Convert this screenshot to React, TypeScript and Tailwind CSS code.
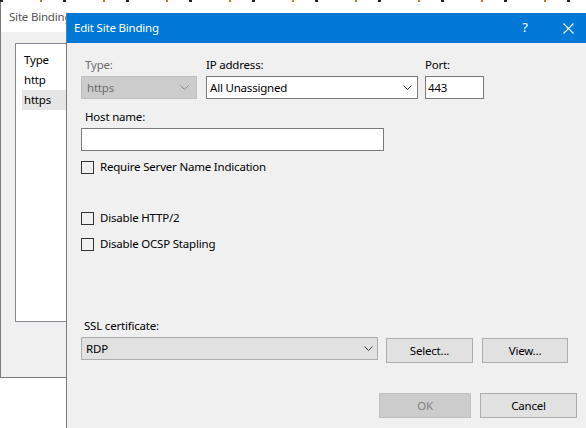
import React from 'react'

const font = { fontFamily: '"Noto Sans", "Open Sans", sans-serif', letterSpacing: '-0.2px' }

function Chevron({ color = '#333333' }: { color?: string }) {
  return (
    <svg width="9" height="5" viewBox="0 0 9 5" className="shrink-0">
      <path d="M0.5 0.5 L4.5 4.5 L8.5 0.5" fill="none" stroke={color} strokeWidth="1" />
    </svg>
  )
}

function Checkbox({ label }: { label: string }) {
  return (
    <div className="flex items-center h-[14px]">
      <div className="w-[13px] h-[13px] border border-[#333333] bg-[#f0f0f0]" />
      <span className="ml-[6px] text-[11.5px] leading-[16px] text-black">{label}</span>
    </div>
  )
}

function Button({ label, width, disabled }: { label: string; width: string; disabled?: boolean }) {
  return (
    <div
      className={
        disabled
          ? `${width} h-[25px] flex items-center justify-center border border-[#bfbfbf] bg-[#cccccc] text-[#838383] text-[11.5px]`
          : `${width} h-[25px] flex items-center justify-center border border-[#adadad] bg-[#e1e1e1] text-black text-[11.5px]`
      }
    >
      {label}
    </div>
  )
}

function BackWindow() {
  return (
    <div className="absolute left-0 top-[2px] w-[120px] h-[376px] border-l border-b border-[#7a7a7a] bg-[#f0f0f0] flex flex-col">
      <div className="h-[30px] bg-white flex items-center pl-[8px] text-[11.5px] text-[#555555]">Site Bindings</div>
      <div className="ml-[14px] mt-[11px] w-[120px] h-[279px] border border-[#828790] bg-white pt-[6px] pl-[6px] text-[11.5px] text-black">
        <div className="h-[20px] pl-[2px] leading-[20px]">Type</div>
        <div className="h-[20px] pl-[2px] leading-[20px]">http</div>
        <div className="h-[20px] pl-[2px] leading-[20px] bg-[#e5e5e5]">https</div>
      </div>
    </div>
  )
}

function Dialog() {
  return (
    <div className="absolute left-[66px] top-[13px] w-[530px] h-[420px] bg-[#f0f0f0] border-l border-[#7a7a7a] flex flex-col">
      <div className="h-[30px] bg-[#0078d7] flex items-center text-white text-[11.5px]">
        <span className="ml-[7px] flex-1">Edit Site Binding</span>
        <span className="w-[20px] text-center text-[13px] mr-[28px]">?</span>
        <svg width="11" height="11" viewBox="0 0 11 11" className="mr-[22px]">
          <path d="M0.5 0.5 L10.5 10.5 M10.5 0.5 L0.5 10.5" stroke="white" strokeWidth="1.1" />
        </svg>
      </div>

      <div className="flex flex-col pl-[14px] pt-[14px]">
        {/* type / ip / port */}
        <div className="flex">
          <div className="flex flex-col w-[116px]">
            <span className="pl-[4px] h-[16px] text-[11.5px] leading-[16px] text-[#6d6d6d]">Type:</span>
            <div className="mt-[3px] h-[23px] border border-[#bfbfbf] bg-[#cccccc] flex items-center justify-between pl-[5px] pr-[7px] text-[11.5px] text-[#6d6d6d]">
              <span>https</span>
              <Chevron color="#888888" />
            </div>
          </div>
          <div className="flex flex-col w-[212px] ml-[9px]">
            <span className="h-[16px] text-[11.5px] leading-[16px] text-black">IP address:</span>
            <div className="mt-[3px] h-[23px] border border-[#7a7a7a] bg-white flex items-center justify-between pl-[3px] pr-[5px] text-[11.5px] text-black">
              <span>All Unassigned</span>
              <Chevron />
            </div>
          </div>
          <div className="flex flex-col w-[59px] ml-[7px]">
            <span className="h-[16px] text-[11.5px] leading-[16px] text-black">Port:</span>
            <div className="mt-[3px] h-[23px] border border-[#7a7a7a] bg-white flex items-center pl-[2px] text-[11.5px] text-black">
              443
            </div>
          </div>
        </div>

        {/* host name */}
        <span className="mt-[10px] pl-[4px] h-[16px] text-[11.5px] leading-[16px] text-black">Host name:</span>
        <div className="mt-[3px] w-[303px] h-[23px] border border-[#7a7a7a] bg-white" />

        <div className="mt-[9px]">
          <Checkbox label="Require Server Name Indication" />
        </div>
        <div className="mt-[37px]">
          <Checkbox label="Disable HTTP/2" />
        </div>
        <div className="mt-[12px]">
          <Checkbox label="Disable OCSP Stapling" />
        </div>

        {/* ssl certificate */}
        <span className="mt-[67px] pl-[3px] h-[16px] text-[11.5px] leading-[16px] text-black">SSL certificate:</span>
        <div className="mt-[3px] flex items-start">
          <div className="w-[297px] h-[23px] border border-[#adadad] bg-[#e1e1e1] flex items-center justify-between pl-[4px] pr-[4px] text-[11.5px] text-black">
            <span>RDP</span>
            <Chevron />
          </div>
          <div className="ml-[8px] mt-[1px]">
            <Button label="Select..." width="w-[87px]" />
          </div>
          <div className="ml-[9px] mt-[1px]">
            <Button label="View..." width="w-[86px]" />
          </div>
        </div>

        <div className="mt-[30px] flex ml-[298px]">
          <Button label="OK" width="w-[92px]" disabled />
          <div className="ml-[9px]">
            <Button label="Cancel" width="w-[97px]" />
          </div>
        </div>
      </div>
    </div>
  )
}

export default function App() {
  return (
    <div className="relative w-[586px] h-[428px] overflow-hidden bg-white" style={font}>
      <div className="absolute left-0 top-0 w-full h-[2px] bg-[repeating-linear-gradient(90deg,#222_0px,#222_3px,#fff_3px,#fff_40px,#b08030_40px,#b08030_42px,#fff_42px,#fff_63px)]" />
      <BackWindow />
      <Dialog />
    </div>
  )
}
